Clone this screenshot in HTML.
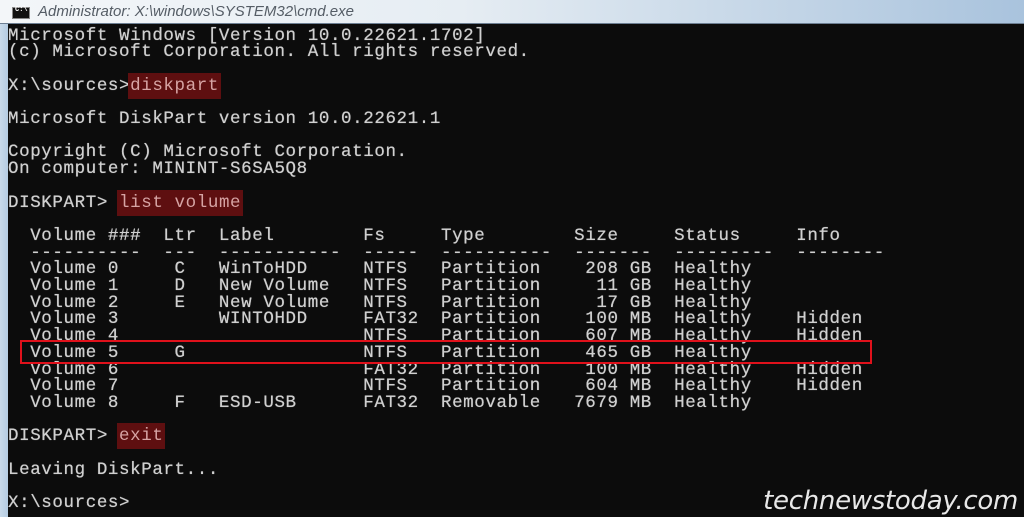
<!DOCTYPE html>
<html><head><meta charset="utf-8"><style>
html,body{margin:0;padding:0;width:1024px;height:517px;overflow:hidden;background:#0c0c0c}
#title{position:absolute;left:0;top:0;width:1024px;height:24px;background:linear-gradient(90deg,#f3f6f9 0%,#e6edf3 45%,#a9c3dd 100%);border-bottom:1px solid #6d7f93;box-sizing:border-box}
#title span{position:absolute;left:38px;top:3px;font:italic 15px "Liberation Sans",sans-serif;color:#555d66}
#icon{position:absolute;left:12px;top:7px;width:16px;height:10px;background:#111;border:1px solid #888}
#icon:after{content:"C:\\";position:absolute;left:2px;top:-2px;font:bold 7px "Liberation Mono",monospace;color:#fff}
#lstrip{position:absolute;left:0;top:24px;width:8px;height:493px;background:linear-gradient(90deg,#c9daea,#b5cce2)}
#term{position:absolute;left:8px;top:25px;right:0;bottom:0;background:#0c0c0c}
pre{position:absolute;left:8px;top:27.5px;margin:0;font:17.5px/16.7px "Liberation Mono",monospace;letter-spacing:0.6px;color:#d0d0d0;white-space:pre;text-shadow:0 0 0.6px #d0d0d0}
.h{background:#5e0f10;color:#d6a4a4;padding:3px 2px;margin:0 -2px;text-shadow:none}
#box{position:absolute;left:20px;top:340px;width:848px;height:20px;border:2.5px solid #e0111b}
#wm{position:absolute;right:6px;top:486px;font:italic 26px "DejaVu Sans","Liberation Sans",sans-serif;font-weight:300;color:#e8e8e8;letter-spacing:-0.3px}
</style></head><body>
<div id="title"><div id="icon"></div><span>Administrator: X:\windows\SYSTEM32\cmd.exe</span></div>
<div id="lstrip"></div>
<div id="term"></div>
<pre>Microsoft Windows [Version 10.0.22621.1702]
(c) Microsoft Corporation. All rights reserved.

X:\sources&gt;<span class="h">diskpart</span>

Microsoft DiskPart version 10.0.22621.1

Copyright (C) Microsoft Corporation.
On computer: MININT-S6SA5Q8

DISKPART&gt; <span class="h">list volume</span>

  Volume ###  Ltr  Label        Fs     Type        Size     Status     Info
  ----------  ---  -----------  -----  ----------  -------  ---------  --------
  Volume 0     C   WinToHDD     NTFS   Partition    208 GB  Healthy
  Volume 1     D   New Volume   NTFS   Partition     11 GB  Healthy
  Volume 2     E   New Volume   NTFS   Partition     17 GB  Healthy
  Volume 3         WINTOHDD     FAT32  Partition    100 MB  Healthy    Hidden
  Volume 4                      NTFS   Partition    607 MB  Healthy    Hidden
  Volume 5     G                NTFS   Partition    465 GB  Healthy
  Volume 6                      FAT32  Partition    100 MB  Healthy    Hidden
  Volume 7                      NTFS   Partition    604 MB  Healthy    Hidden
  Volume 8     F   ESD-USB      FAT32  Removable   7679 MB  Healthy

DISKPART&gt; <span class="h">exit</span>

Leaving DiskPart...

X:\sources&gt;</pre>
<div id="box"></div>
<div id="wm">technewstoday.com</div>
</body></html>
